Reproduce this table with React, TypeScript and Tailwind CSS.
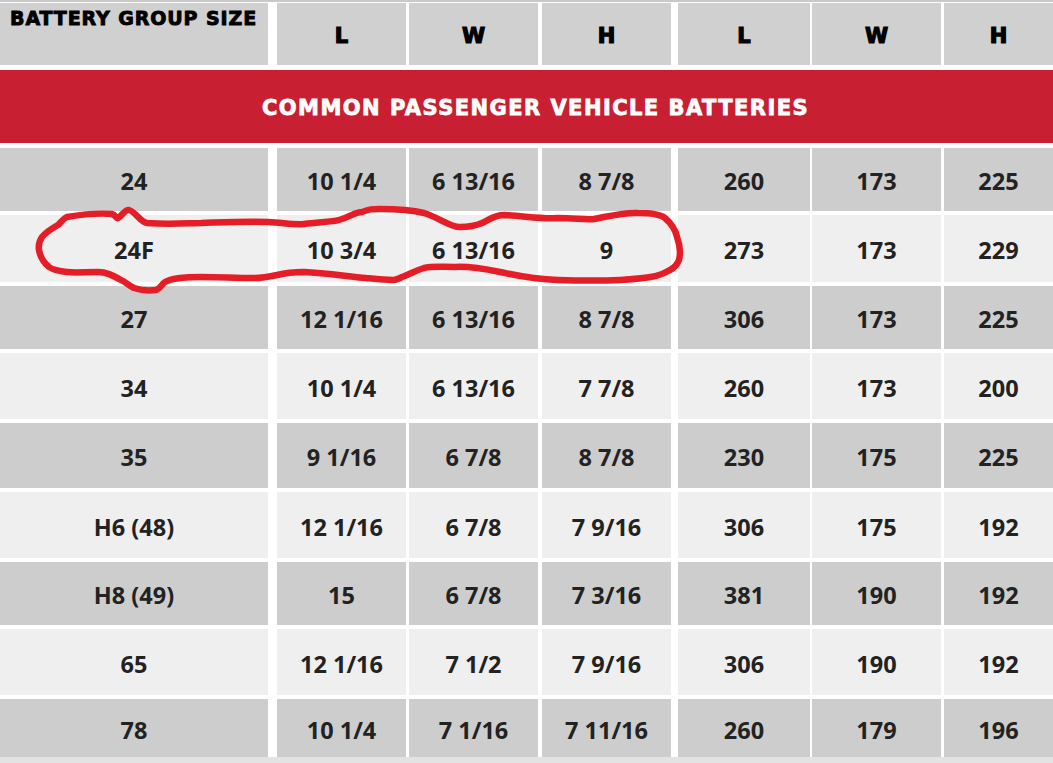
import React from 'react';

// Battery group size chart, inches (L W H) then millimetres (L W H)

interface BatteryRow {
  group: string;
  inches: [string, string, string];
  mm: [string, string, string];
  height: string;
}

const rows: BatteryRow[] = [
  { group: '24', inches: ['10 1/4', '6 13/16', '8 7/8'], mm: ['260', '173', '225'], height: 'h-[63px]' },
  { group: '24F', inches: ['10 3/4', '6 13/16', '9'], mm: ['273', '173', '229'], height: 'h-[67px]' },
  { group: '27', inches: ['12 1/16', '6 13/16', '8 7/8'], mm: ['306', '173', '225'], height: 'h-[63px]' },
  { group: '34', inches: ['10 1/4', '6 13/16', '7 7/8'], mm: ['260', '173', '200'], height: 'h-[66px]' },
  { group: '35', inches: ['9 1/16', '6 7/8', '8 7/8'], mm: ['230', '175', '225'], height: 'h-[65px]' },
  { group: 'H6 (48)', inches: ['12 1/16', '6 7/8', '7 9/16'], mm: ['306', '175', '192'], height: 'h-[66px]' },
  { group: 'H8 (49)', inches: ['15', '6 7/8', '7 3/16'], mm: ['381', '190', '192'], height: 'h-[63px]' },
  { group: '65', inches: ['12 1/16', '7 1/2', '7 9/16'], mm: ['306', '190', '192'], height: 'h-[66px]' },
  { group: '78', inches: ['10 1/4', '7 1/16', '7 11/16'], mm: ['260', '179', '196'], height: 'h-[58px]' },
];

// column widths and the white gutters before each column
const cols = [
  'w-[268px]',
  'ml-[9px] w-[129px]',
  'ml-[3px] w-[129px]',
  'ml-[4px] w-[129px]',
  'ml-[7px] w-[132px]',
  'ml-[2px] w-[129px]',
  'ml-[3px] flex-1',
];

const heavy = { fontFamily: '"DejaVu Sans", Verdana, sans-serif' };
const body = { fontFamily: '"Open Sans", "Liberation Sans", sans-serif' };

const Cell: React.FC<{ col: number; shade: string; children: React.ReactNode }> = ({ col, shade, children }) => (
  <div className={`${cols[col]} ${shade} flex items-center justify-center pt-[5px]`}>{children}</div>
);

const Annotation = () => (
  <svg className="absolute left-0 top-0 pointer-events-none" width="1053" height="763" viewBox="0 0 1053 763">
    <path
      d="M67 217 C85 214 100 213 112 214 C116 215 116 219 118 218 C122 216 125 209 129 210 C136 212 140 222 147 223 C170 225 190 223 201 223 C230 222 250 221 268 222 C285 223 295 225 304 224 C320 222 332 222 339 220 C350 217 355 212 362 212 C370 209 372 209 379 209 C400 209 412 210 424 213 C440 218 450 227 460 227 C470 227 475 226 482 223 C490 219 495 215 504 215 C525 216 540 219 558 218 C575 218 585 220 594 219 C610 216 625 212 638 213 C650 213 660 214 665 218 C673 225 676 232 677 237 C680 245 681 252 679 260 C677 265 674 268 670 270 C660 276 652 277 643 278 C620 281 590 281 558 280 C530 279 515 275 500 272 C485 269 470 266 455 267 C440 267 432 266 424 268 C414 271 408 275 402 277 C398 279 396 280 393 280 C385 280 376 279 366 278 C345 276 325 273 304 272 C295 272 285 273 277 275 C268 277 262 278 254 278 C235 278 220 277 201 277 C185 277 172 278 165 282 C161 285 160 289 156 290 C148 291 140 290 134 288 C128 285 126 282 121 280 C112 275 106 272 98 272 C85 272 75 273 67 272 C58 271 53 270 49 267 C43 262 40 256 39 250 C38 244 40 240 42 237 C47 231 53 228 58 225 C62 221 64 218 67 217 Z"
      fill="none"
      stroke="#e51d27"
      strokeWidth="6.5"
      strokeLinejoin="round"
    />
  </svg>
);

export default function App() {
  return (
    <div className="relative w-[1053px] h-[763px] overflow-hidden bg-white text-[#222]" style={body}>
      <div className="h-[2px] bg-[#c9c9c9]" />
      <div className="mt-[1px] flex h-[62px]">
        <div className={`${cols[0]} bg-[#d0d0d0] pl-[10px] pt-[6px]`}>
          <span
            className="block text-[19px] font-bold leading-none tracking-[0.9px] text-black whitespace-nowrap [-webkit-text-stroke:0.9px_black]"
            style={heavy}
          >
            BATTERY GROUP SIZE
          </span>
        </div>
        {['L', 'W', 'H', 'L', 'W', 'H'].map((h, i) => (
          <Cell key={i} col={i + 1} shade="bg-[#d0d0d0]">
            <span className="text-[21px] font-bold text-black [-webkit-text-stroke:1.2px_black]" style={heavy}>{h}</span>
          </Cell>
        ))}
      </div>

      <div className="mt-[5px] flex h-[73px] items-center justify-center bg-[#c91f33] pl-[18px] pt-[5px]">
        <span className="text-[21px] font-bold tracking-[1.45px] text-white [-webkit-text-stroke:0.8px_white]" style={heavy}>
          COMMON PASSENGER VEHICLE BATTERIES
        </span>
      </div>

      <div className="mt-[5px] flex flex-col gap-[4px]">
        {rows.map((r, idx) => {
          const shade = idx % 2 === 0 ? 'bg-[#cdcdcd]' : 'bg-[#efefef]';
          return (
            <div key={r.group} className={`flex ${r.height} text-[23.5px] font-bold`}>
              <Cell col={0} shade={shade}>{r.group}</Cell>
              {[...r.inches, ...r.mm].map((v, i) => (
                <Cell key={i} col={i + 1} shade={shade}>{v}</Cell>
              ))}
            </div>
          );
        })}
      </div>
      <div className="h-[6px] bg-[#e3e3e3]" />

      <Annotation />
    </div>
  );
}
